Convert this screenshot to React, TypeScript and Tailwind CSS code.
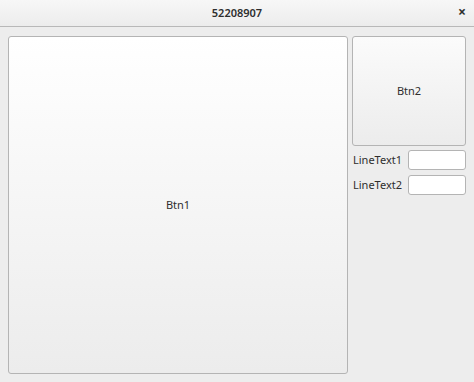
export default function App() {
  return (
    <div
      className="w-[474px] h-[382px] flex flex-col bg-[#ededed] overflow-hidden"
      style={{ fontFamily: '"Noto Sans", "Open Sans", sans-serif' }}
    >
      <div className="h-[27px] shrink-0 relative flex items-center justify-center bg-gradient-to-b from-[#f7f7f7] to-[#ececec] border-b border-[#b8b8b8]">
        <span className="text-[11px] font-semibold text-[#2e2e2e]">52208907</span>
        <span className="absolute right-[8px] top-[5px] text-[14px] font-bold text-[#2e2e2e] leading-none">×</span>
      </div>
      <div className="flex-1 flex gap-[4px] pt-[9px] pl-[8px] pr-[8px] pb-[8px]">
        <button className="flex-1 flex items-center justify-center rounded-[3px] border border-[#b4b4b4] bg-gradient-to-b from-[#ffffff] to-[#ececec] text-[11px] text-[#2e2e2e]">
          Btn1
        </button>
        <div className="w-[114px] flex flex-col">
          <button className="h-[110px] flex items-center justify-center rounded-[3px] border border-[#b4b4b4] bg-gradient-to-b from-[#fbfbfb] to-[#ececec] text-[11px] text-[#2e2e2e]">
            Btn2
          </button>
          <div className="mt-[4px] flex items-center justify-between h-[20px]">
            <span className="pl-[1px] text-[11px] text-[#2e2e2e]">LineText1</span>
            <div className="w-[58px] h-[20px] rounded-[3px] border border-[#b4b4b4] bg-white" />
          </div>
          <div className="mt-[5px] flex items-center justify-between h-[20px]">
            <span className="pl-[1px] text-[11px] text-[#2e2e2e]">LineText2</span>
            <div className="w-[58px] h-[20px] rounded-[3px] border border-[#b4b4b4] bg-white" />
          </div>
        </div>
      </div>
    </div>
  );
}
